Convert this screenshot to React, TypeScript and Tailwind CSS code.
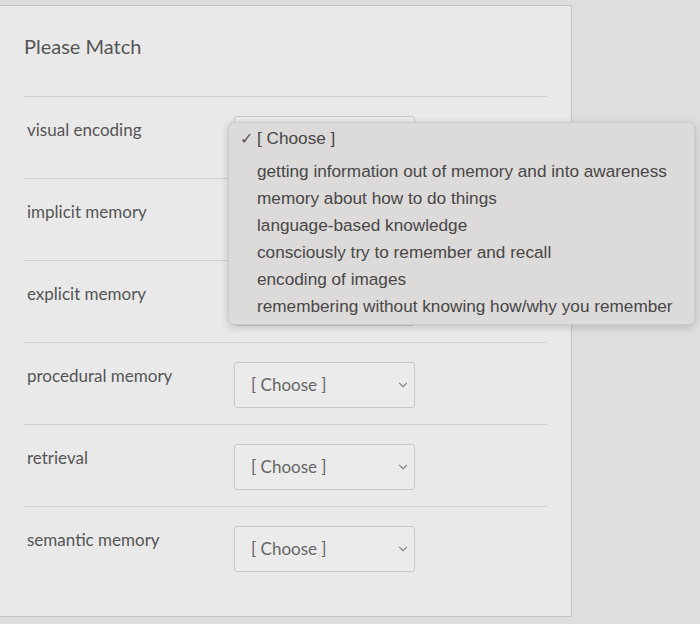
import { ChevronDown } from 'lucide-react';

const rows = [
  'visual encoding',
  'implicit memory',
  'explicit memory',
  'procedural memory',
  'retrieval',
  'semantic memory',
];

const options = [
  'getting information out of memory and into awareness',
  'memory about how to do things',
  'language-based knowledge',
  'consciously try to remember and recall',
  'encoding of images',
  'remembering without knowing how/why you remember',
];

function Select({ covered }: { covered: boolean }) {
  return (
    <div className="w-[181px] h-[46px] border border-[#c9c9c9] rounded-[3px] bg-[#ebebeb] flex items-center justify-between pl-[16px] pr-[4px]">
      <span className={`text-[17px] text-[#666] ${covered ? 'invisible' : ''}`}>[ Choose ]</span>
      <ChevronDown className="w-[14px] h-[14px] text-[#888]" strokeWidth={2} />
    </div>
  );
}

export default function App() {
  return (
    <div
      className="relative w-[700px] h-[624px] bg-[#dedede] pt-[5px] overflow-hidden"
      style={{ fontFamily: 'Lato, "Open Sans", sans-serif' }}
    >
      <div className="w-[572px] h-[612px] bg-[#e9e9e9] border-t border-r border-b border-[#c4c4c4]">
        <h2 className="pl-[24px] pt-[28px] text-[20px] leading-[24px] text-[#555] font-normal">Please Match</h2>
        <div className="mx-[24px] mt-[38px] border-t border-[#cfcfcf]">
          {rows.map((label, i) => (
            <div
              key={label}
              className={`flex items-start pt-[19px] pb-[16px] ${i < rows.length - 1 ? 'border-b border-[#cfcfcf]' : ''}`}
            >
              <div className="w-[210px] pl-[3px] pt-[4px] text-[17px] leading-[20px] text-[#555]">{label}</div>
              <Select covered={i < 3} />
            </div>
          ))}
        </div>
      </div>

      {/* open dropdown menu */}
      <div
        className="absolute left-[228px] top-[122px] w-[467px] rounded-[6px] bg-[#dddada] border border-[#cdcaca] shadow-[0_2px_8px_rgba(0,0,0,0.18)] pt-[2px] pb-[4px] text-[#474747]"
        style={{ fontFamily: '"Liberation Sans", Arial, sans-serif' }}
      >
        <div className="flex items-center h-[27px] text-[17.2px]">
          <span className="w-[28px] pl-[11px] text-[16px] text-[#555]">✓</span>
          <span>[ Choose ]</span>
        </div>
        <div className="mt-[6px]">
          {options.map((o) => (
            <div key={o} className="h-[27px] leading-[27px] pl-[28px] text-[17.2px] whitespace-nowrap">
              {o}
            </div>
          ))}
        </div>
      </div>
    </div>
  );
}
